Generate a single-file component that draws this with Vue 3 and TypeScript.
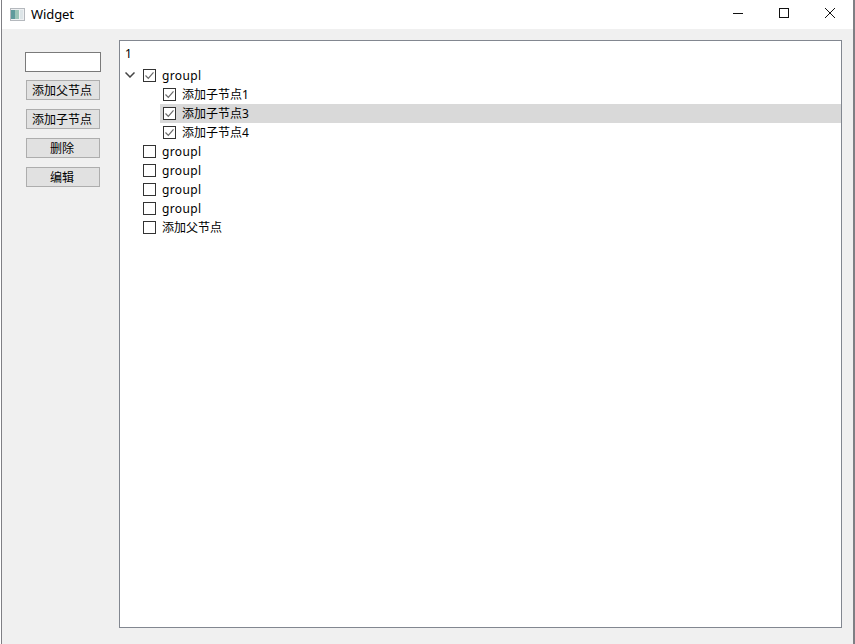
<script setup lang="ts">
interface Row { label: string; checked: boolean; child?: boolean; selected?: boolean; expander?: boolean }
const rows: Row[] = [
  { label: 'groupl', checked: true, expander: true },
  { label: '添加子节点1', checked: true, child: true },
  { label: '添加子节点3', checked: true, child: true, selected: true },
  { label: '添加子节点4', checked: true, child: true },
  { label: 'groupl', checked: false },
  { label: 'groupl', checked: false },
  { label: 'groupl', checked: false },
  { label: 'groupl', checked: false },
  { label: '添加父节点', checked: false },
]
const actions = ['添加父节点', '添加子节点', '删除', '编辑']
</script>

<template>
  <div class="desktop">
    <div class="window">
      <header class="titlebar">
        <svg class="app-icon" width="15" height="13" viewBox="0 0 15 13">
          <rect x="0.5" y="0.5" width="14" height="12" fill="#eef0f2" stroke="#b4b8bd" />
          <rect x="1" y="2" width="4" height="9" fill="#5f9a9c" />
          <rect x="5" y="2" width="4" height="9" fill="#9cc4b8" />
          <rect x="10" y="2" width="3" height="9" fill="#dde5e8" />
        </svg>
        <span class="title">Widget</span>
        <div class="controls">
          <svg class="ctrl" width="46" height="29" viewBox="0 0 46 29"><path d="M18 13.5h10" stroke="#111" fill="none" /></svg>
          <svg class="ctrl" width="46" height="29" viewBox="0 0 46 29"><rect x="18.5" y="8.5" width="9" height="9" stroke="#111" fill="none" /></svg>
          <svg class="ctrl" width="46" height="29" viewBox="0 0 46 29"><path d="M18 8l10 10M28 8L18 18" stroke="#111" fill="none" /></svg>
        </div>
      </header>
      <main class="client">
        <aside class="side">
          <input class="name-input" type="text" />
          <button v-for="a in actions" :key="a" class="action" type="button">{{ a }}</button>
        </aside>
        <section class="tree">
          <div class="tree-head">1</div>
          <div v-for="(r, i) in rows" :key="i" class="row" :class="{ child: r.child }">
            <div class="cell" :class="{ selected: r.selected }">
              <svg v-if="r.expander" class="expander" width="10" height="6" viewBox="0 0 10 6">
                <path d="M0.5 0.5L5 5l4.5-4.5" stroke="#444" stroke-width="1.5" fill="none" />
              </svg>
              <svg class="check" width="13" height="13" viewBox="0 0 13 13">
                <rect x="0.5" y="0.5" width="12" height="12" fill="#fff" stroke="#333" />
                <path v-if="r.checked" d="M2.5 6.5l2.8 2.8 5.2-6" stroke="#6a6a6a" stroke-width="1.2" fill="none" />
              </svg>
              <span class="label" :class="{ latin: !r.child && r.label.startsWith('group') }">{{ r.label }}</span>
            </div>
          </div>
        </section>
      </main>
    </div>
  </div>
</template>

<style>
html, body { margin: 0; padding: 0; }
</style>

<style scoped>
.desktop {
  width: 855px;
  height: 644px;
  padding-left: 1px;
  box-sizing: border-box;
  background: #fff;
  overflow: hidden;
  font-family: "Noto Sans", "Noto Sans CJK SC", sans-serif;
  font-size: 12px;
  color: #000;
}
.window {
  height: 100%;
  display: flex;
  flex-direction: column;
  border-left: 1px solid #7f7f84;
  border-right: 2px solid #7f7f84;
  box-sizing: border-box;
}
.titlebar {
  height: 29px;
  flex: none;
  display: flex;
  align-items: center;
  background: #fff;
  padding-left: 8px;
}
.app-icon { flex: none; margin-top: -1px; }
.title { margin-left: 6px; font-size: 13px; margin-top: -2px; letter-spacing: -0.1px; }
.controls { margin-left: auto; display: flex; }
.ctrl { display: block; }
.client {
  flex: 1;
  display: flex;
  background: #f0f0f0;
  min-height: 0;
  padding: 11px 11px 16px 23px;
}
.side {
  width: 76px;
  flex: none;
  display: flex;
  flex-direction: column;
  align-items: center;
  padding-top: 12px;
  gap: 9px;
}
.name-input {
  width: 76px;
  height: 20px;
  box-sizing: border-box;
  border: 1px solid #7a7a7a;
  background: #fff;
  padding: 0;
  margin: 0 0 -1px;
  outline: none;
}
.action {
  width: 74px;
  height: 20px;
  box-sizing: border-box;
  border: 1px solid #adadad;
  background: #e1e1e1;
  padding: 0 2px 0 0;
  margin: 0;
  font: inherit;
  color: #000;
}
.tree {
  flex: 1;
  margin-left: 18px;
  border: 1px solid #828790;
  background: #fff;
  padding-top: 3px;
  min-width: 0;
}
.tree-head {
  height: 19px;
  line-height: 19px;
  padding-left: 5px;
  margin-bottom: 3px;
}
.row {
  height: 19px;
  padding-left: 23px;
}
.row.child { padding-left: 40px; }
.cell {
  position: relative;
  height: 19px;
  display: flex;
  align-items: center;
}
.child .cell { padding-left: 3px; }
.selected { background: #d9d9d9; }
.expander { position: absolute; left: -18px; top: 6px; }
.check { flex: none; display: block; }
.label { margin-left: 6px; line-height: 19px; white-space: nowrap; }
.latin { letter-spacing: 0.35px; }
</style>
